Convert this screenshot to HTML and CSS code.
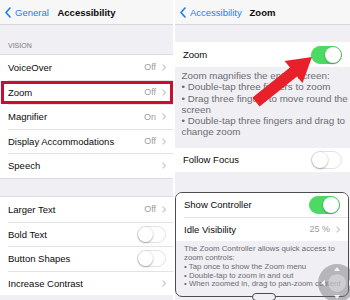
FILE: index.html
```html
<!DOCTYPE html>
<html>
<head>
<meta charset="utf-8">
<link rel="stylesheet" href="styles.css">
</head>
<body>
<div class="screen">
  <div class="panel left">
    <div class="nav">
      <div class="back"><svg class="back-chev" width="6" height="11" viewBox="0 0 6 11"><path d="M5 1 L1 5.5 L5 10" fill="none" stroke="#1a7cf5" stroke-width="1.6" stroke-linecap="round" stroke-linejoin="round"/></svg>General</div>
      <div class="title">Accessibility</div>
    </div>
    <div class="section-header">VISION</div>
    <div class="group">
      <div class="row"><span class="label">VoiceOver</span><span class="value">Off<svg class="chev" width="4" height="7" viewBox="0 0 4 7"><path d="M0.6 0.6 L3.4 3.5 L0.6 6.4" fill="none" stroke="#c7c7cc" stroke-width="1.2"/></svg></span></div>
      <div class="row highlight"><span class="label">Zoom</span><span class="value">Off<svg class="chev" width="4" height="7" viewBox="0 0 4 7"><path d="M0.6 0.6 L3.4 3.5 L0.6 6.4" fill="none" stroke="#c7c7cc" stroke-width="1.2"/></svg></span></div>
      <div class="row"><span class="label">Magnifier</span><span class="value">On<svg class="chev" width="4" height="7" viewBox="0 0 4 7"><path d="M0.6 0.6 L3.4 3.5 L0.6 6.4" fill="none" stroke="#c7c7cc" stroke-width="1.2"/></svg></span></div>
      <div class="row"><span class="label">Display Accommodations</span><span class="value">Off<svg class="chev" width="4" height="7" viewBox="0 0 4 7"><path d="M0.6 0.6 L3.4 3.5 L0.6 6.4" fill="none" stroke="#c7c7cc" stroke-width="1.2"/></svg></span></div>
      <div class="row"><span class="label">Speech</span><span class="value"><svg class="chev" width="4" height="7" viewBox="0 0 4 7"><path d="M0.6 0.6 L3.4 3.5 L0.6 6.4" fill="none" stroke="#c7c7cc" stroke-width="1.2"/></svg></span></div>
    </div>
    <div class="gap"></div>
    <div class="group">
      <div class="row"><span class="label">Larger Text</span><span class="value">Off<svg class="chev" width="4" height="7" viewBox="0 0 4 7"><path d="M0.6 0.6 L3.4 3.5 L0.6 6.4" fill="none" stroke="#c7c7cc" stroke-width="1.2"/></svg></span></div>
      <div class="row"><span class="label">Bold Text</span><span class="toggle small"><span class="knob"></span></span></div>
      <div class="row"><span class="label">Button Shapes</span><span class="toggle small"><span class="knob"></span></span></div>
      <div class="row"><span class="label">Increase Contrast</span><span class="value"><svg class="chev" width="4" height="7" viewBox="0 0 4 7"><path d="M0.6 0.6 L3.4 3.5 L0.6 6.4" fill="none" stroke="#c7c7cc" stroke-width="1.2"/></svg></span></div>
    </div>
  </div>

  <div class="panel right">
    <div class="nav">
      <div class="back"><svg class="back-chev" width="6" height="11" viewBox="0 0 6 11"><path d="M5 1 L1 5.5 L5 10" fill="none" stroke="#1a7cf5" stroke-width="1.6" stroke-linecap="round" stroke-linejoin="round"/></svg>Accessibility</div>
      <div class="title">Zoom</div>
    </div>
    <div class="top-gap"></div>
    <div class="group">
      <div class="row tall"><span class="label">Zoom</span><span class="toggle on"><span class="knob"></span></span></div>
    </div>
    <div class="footer big">Zoom magnifies the entire screen:<br>• Double-tap three fingers to zoom<br>• Drag three fingers to move round the<br>screen<br>• Double-tap three fingers and drag to<br>change zoom</div>
    <div class="group">
      <div class="row"><span class="label">Follow Focus</span><span class="toggle"><span class="knob"></span></span></div>
    </div>
    <div class="window">
      <div class="group">
        <div class="row"><span class="label">Show Controller</span><span class="toggle on"><span class="knob"></span></span></div>
        <div class="row"><span class="label">Idle Visibility</span><span class="value">25 %<svg class="chev" width="4" height="7" viewBox="0 0 4 7"><path d="M0.6 0.6 L3.4 3.5 L0.6 6.4" fill="none" stroke="#c7c7cc" stroke-width="1.2"/></svg></span></div>
      </div>
      <div class="footer small">The Zoom Controller allows quick access to<br>zoom controls:<br>• Tap once to show the Zoom menu<br>• Double-tap to zoom in and out<br>• When zoomed in, drag to pan-zoom content</div>
      <div class="handle"></div>
      <svg class="controller" width="40" height="40" viewBox="0 0 40 40">
        <circle cx="20" cy="20" r="19" fill="rgba(110,110,115,0.45)"/>
        <circle cx="20" cy="20" r="9" fill="rgba(225,225,228,0.55)"/>
        <path d="M20 4 L17 8 L23 8 Z M20 36 L17 32 L23 32 Z M4 20 L8 17 L8 23 Z M36 20 L32 17 L32 23 Z" fill="rgba(255,255,255,0.85)"/>
      </svg>
    </div>
  </div>

  <svg class="arrow" width="350" height="300" viewBox="0 0 350 300">
    <polygon points="312,57 302.5,83 297,76.5 259.5,106.5 252.5,97.5 290,67.5 284.5,61" fill="#e8202a"/>
  </svg>
</div>
</body>
</html>
```

FILE: styles.css
```css
* { box-sizing: border-box; margin: 0; padding: 0; }
body {
  margin: 0;
  width: 350px;
  height: 300px;
  overflow: hidden;
  background: #fff;
  font-family: "Liberation Sans", Arial, sans-serif;
}
.screen {
  position: relative;
  display: flex;
  gap: 2px;
  width: 350px;
  height: 300px;
  background: #fff;
}
.panel {
  background: #efeff4;
  display: flex;
  flex-direction: column;
  height: 300px;
  overflow: hidden;
}
.left { width: 173px; }
.right { width: 175px; }

.nav {
  height: 25px;
  flex: none;
  background: #f7f7f8;
  border-bottom: 1px solid #d9d9dd;
  display: grid;
  grid-template-columns: 1fr auto 1fr;
  align-items: center;
}
.back {
  display: flex;
  align-items: center;
  gap: 4px;
  padding-left: 5px;
  font-size: 9.5px;
  color: #1a7cf5;
  white-space: nowrap;
}
.title {
  font-size: 9.5px;
  font-weight: bold;
  color: #0a0a0a;
  white-space: nowrap;
}
.section-header {
  height: 30px;
  flex: none;
  display: flex;
  align-items: flex-end;
  padding: 0 0 4px 8px;
  font-size: 7px;
  line-height: 8px;
  color: #7b7b80;
  border-bottom: 1px solid #dcdce0;
}
.group {
  background: #fff;
  flex: none;
}
.row {
  height: 24.5px;
  margin-left: 8px;
  padding-right: 7px;
  display: flex;
  align-items: center;
  position: relative;
  font-size: 9.5px;
  color: #0a0a0a;
  border-top: 1px solid #e3e3e7;
  white-space: nowrap;
}
.row:first-child { border-top: none; }
.row.tall { height: 25px; }
.right .row { height: 24px; padding-right: 8px; }
.right .row.tall { height: 25px; }
.label { flex: 1; }
.value {
  display: flex;
  align-items: center;
  gap: 6px;
  font-size: 9px;
  color: #9d9da2;
}
.highlight::after {
  content: "";
  position: absolute;
  left: -7px;
  right: 0;
  top: 0.5px;
  bottom: 0.5px;
  border: 3px solid #c8102e;
}
.gap {
  height: 19.5px;
  flex: none;
  border-top: 1px solid #dcdce0;
  border-bottom: 1px solid #dcdce0;
}

.toggle {
  width: 31px;
  height: 18px;
  border-radius: 9px;
  border: 1px solid #e2e2e6;
  background: #fff;
  display: flex;
  align-items: center;
  justify-content: flex-start;
}
.toggle.small { width: 29px; height: 17px; }
.toggle.on {
  background: #4cd964;
  border-color: #4cd964;
  justify-content: flex-end;
}
.knob {
  width: 16px;
  height: 16px;
  border-radius: 50%;
  background: #fff;
  box-shadow: 0 1px 2px rgba(0, 0, 0, 0.28), 0 0 0 0.5px rgba(0, 0, 0, 0.08);
}
.toggle.small .knob { width: 15px; height: 15px; }

.top-gap { height: 17px; flex: none; }
.footer {
  color: #6d6d72;
  white-space: nowrap;
  flex: none;
}
.footer.big {
  font-size: 9.8px;
  line-height: 11.3px;
  padding: 3px 0 10.2px 6.5px;
}
.footer.small {
  font-size: 7.8px;
  line-height: 8.8px;
  padding: 4.5px 0 0 8px;
}
.window {
  position: relative;
  margin-top: 19.7px;
  margin-right: 1px;
  height: 105px;
  flex: none;
  border: 1.5px solid #4d4d4f;
  border-radius: 7px;
  background: #efeff4;
}
.window .group { border-radius: 6px 6px 0 0; }
.handle {
  position: absolute;
  left: 76px;
  bottom: -5px;
  width: 24px;
  height: 8px;
  border: 1.5px solid #4d4d4f;
  border-radius: 4px;
  background: #efeff4;
}
.controller {
  position: absolute;
  left: 141px;
  top: 70px;
}
.arrow {
  position: absolute;
  left: 0;
  top: 0;
  pointer-events: none;
}
```
